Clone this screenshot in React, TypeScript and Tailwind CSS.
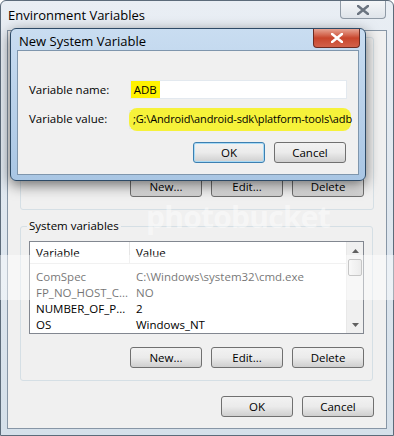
import React from 'react';

const font = { fontFamily: '"Open Sans", "Noto Sans", sans-serif' };

const Btn: React.FC<{ label: string; w?: string; focus?: boolean }> = ({ label, w = 'w-[72px]', focus }) => (
  <div
    className={`${w} h-[21px] rounded-[3px] border ${
      focus ? 'border-[#3c7fb1] shadow-[inset_0_0_0_1px_#a8daf5]' : 'border-[#707070]'
    } bg-gradient-to-b from-[#f2f2f2] via-[#ebebeb] to-[#cfcfcf] flex items-center justify-center text-[11.5px] text-black`}
  >
    {label}
  </div>
);

const CloseGlyph: React.FC<{ color: string }> = ({ color }) => (
  <svg width="12" height="10" viewBox="0 0 12 10">
    <path d="M1 1 L11 9 M11 1 L1 9" stroke={color} strokeWidth="2.6" strokeLinecap="square" />
  </svg>
);

const rows = [
  ['ComSpec', 'C:\\Windows\\system32\\cmd.exe'],
  ['FP_NO_HOST_C...', 'NO'],
  ['NUMBER_OF_P...', '2'],
  ['OS', 'Windows_NT'],
];

export default function App() {
  return (
    <div style={font} className="relative w-[394px] h-[436px] overflow-hidden bg-white">
      {/* outer window */}
      <div className="w-[394px] h-[436px] flex flex-col rounded-t-[6px] border border-[#5c6b7a] bg-gradient-to-b from-[#e9eef4] via-[#dfe7ef] to-[#d5e0ea]">
        <div className="h-[29px] flex items-start justify-between">
          <div className="pl-[7px] pt-[5px] text-[13px] text-black">Environment Variables</div>
          <div className="mr-[7px] w-[46px] h-[18px] rounded-b-[4px] border border-t-0 border-[#8f9aa6] bg-gradient-to-b from-[#f4f6f8] to-[#dfe4ea] flex items-center justify-center">
            <CloseGlyph color="#6b7480" />
          </div>
        </div>
        <div className="mx-[6px] mb-[6px] flex-1 flex flex-col border border-[#8796a6] bg-[#f0f0f0] px-[12px]">
          {/* user variables group */}
          <div className="mt-[6px] h-[173px] border border-[#d5dfe5] rounded-[3px] flex flex-col justify-end items-end pr-[9px] pb-[12px]">
            <div className="flex gap-[9px]">
              <Btn label="New..." />
              <Btn label="Edit..." />
              <Btn label="Delete" />
            </div>
          </div>
          {/* system variables group */}
          <div className="relative mt-[16px] h-[155px] w-[353px] border border-[#d5dfe5] rounded-[3px] px-[8px] pt-[14px]">
            <div className="absolute -top-[9px] left-[6px] px-[2px] bg-[#f0f0f0] text-[11.5px] text-black leading-[16px]">
              System variables
            </div>
            <div className="h-[93px] border border-[#828790] bg-white flex">
              <div className="flex-1 flex flex-col">
                <div className="h-[22px] flex text-[11.5px] text-black border-b border-[#e5e5e5]">
                  <div className="w-[100px] pl-[6px] flex items-center border-r border-[#e5e5e5]">Variable</div>
                  <div className="pl-[6px] flex items-center">Value</div>
                </div>
                <div className="pt-[5px]">
                  {rows.map(([k, v]) => (
                    <div key={k} className="h-[16px] flex text-[11.5px] text-black items-center">
                      <div className="w-[100px] pl-[6px] whitespace-nowrap overflow-hidden">{k}</div>
                      <div className="pl-[6px] whitespace-nowrap">{v}</div>
                    </div>
                  ))}
                </div>
              </div>
              <div className="w-[17px] bg-[#f0f0f0] border-l border-[#e8e8e8] flex flex-col">
                <div className="h-[17px] flex items-center justify-center">
                  <svg width="7" height="4" viewBox="0 0 7 4"><path d="M0 4 L3.5 0 L7 4 Z" fill="#606060" /></svg>
                </div>
                <div className="mx-[1px] h-[17px] rounded-[2px] border border-[#979797] bg-gradient-to-r from-[#f3f3f3] to-[#dcdcdc]" />
                <div className="flex-1" />
                <div className="h-[17px] flex items-center justify-center">
                  <svg width="7" height="4" viewBox="0 0 7 4"><path d="M0 0 L3.5 4 L7 0 Z" fill="#606060" /></svg>
                </div>
              </div>
            </div>
            <div className="mt-[13px] flex justify-end gap-[9px]">
              <Btn label="New..." />
              <Btn label="Edit..." />
              <Btn label="Delete" />
            </div>
          </div>
          <div className="mt-[15px] flex justify-end gap-[9px] pr-[0px]">
            <Btn label="OK" />
            <Btn label="Cancel" />
          </div>
        </div>
      </div>

      {/* photobucket watermark */}
      <div className="absolute left-0 top-[255px] w-[394px] h-[45px] bg-white/45 pointer-events-none" />
      <div className="absolute left-[146px] top-[205px] text-[30px] leading-[24px] font-bold text-white/45 tracking-tight pointer-events-none whitespace-nowrap">
        photobucket
      </div>

      {/* new system variable dialog */}
      <div className="absolute left-[10px] top-[28px] w-[356px] h-[153px] rounded-[6px] border border-[#2d4a66] bg-gradient-to-b from-[#c9ddf1] via-[#b9d1ea] to-[#a9c6e4] shadow-[0_4px_14px_rgba(0,0,0,0.55)] flex flex-col">
        <div className="h-[21px] flex items-start justify-between">
          <div className="pl-[8px] pt-[4px] text-[13px] text-black leading-[16px]">New System Variable</div>
          <div className="mr-[5px] w-[47px] h-[19px] rounded-b-[4px] border border-t-0 border-[#6d2b22] bg-gradient-to-b from-[#e6a393] via-[#c8452c] to-[#d2614a] flex items-center justify-center">
            <CloseGlyph color="#ffffff" />
          </div>
        </div>
        <div className="mx-[6px] mb-[5px] flex-1 border border-[#7f96ad] bg-[#f0f0f0] px-[11px] pt-[29px] text-[11.5px] text-black">
          <div className="flex items-center h-[19px]">
            <div className="w-[101px]">Variable name:</div>
            <div className="w-[218px] h-[19px] bg-white border border-[#e3e9ef] flex items-center">
              <span className="bg-[#fff200] h-[17px] px-[3px] flex items-center">ADB</span>
            </div>
          </div>
          <div className="flex items-center h-[20px] mt-[10px]">
            <div className="w-[101px]">Variable value:</div>
            <div className="relative w-[218px] h-[19px] bg-white border border-[#e3e9ef]">
              <div className="absolute -left-[1px] -right-[5px] -top-[3px] -bottom-[3px] rounded-[8px] bg-[#f6f23a]" />
              <div className="relative h-full flex items-center pl-[3px] whitespace-nowrap text-[11px] tracking-[-0.15px]">
                ;G:\Android\android-sdk\platform-tools\adb
              </div>
            </div>
          </div>
          <div className="mt-[13px] flex justify-end gap-[9px] pr-[1px]">
            <Btn label="OK" focus />
            <Btn label="Cancel" />
          </div>
        </div>
      </div>
    </div>
  );
}
